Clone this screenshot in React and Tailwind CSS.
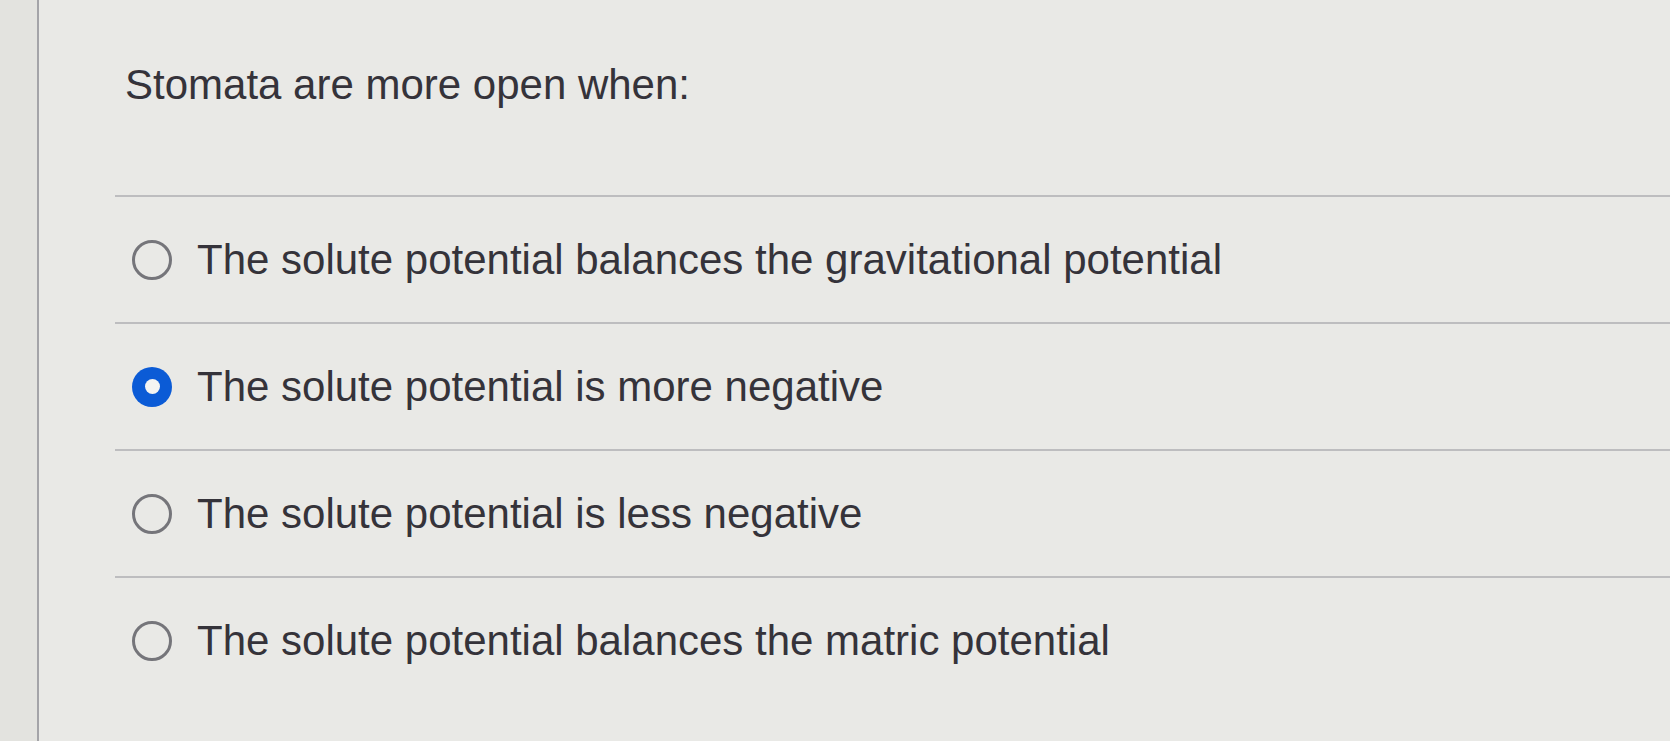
import { useState } from "react";

const options = [
  "The solute potential balances the gravitational potential",
  "The solute potential is more negative",
  "The solute potential is less negative",
  "The solute potential balances the matric potential",
];

function Radio({ checked }) {
  if (checked) {
    return (
      <span className="flex h-[40px] w-[40px] shrink-0 items-center justify-center rounded-full bg-[#0b5bd6]">
        <span className="h-[15px] w-[15px] rounded-full bg-[#f4f4f2]" />
      </span>
    );
  }
  return <span className="h-[40px] w-[40px] shrink-0 rounded-full border-[3px] border-[#75757a]" />;
}

export default function App() {
  const [selected, setSelected] = useState(1);

  return (
    <div
      className="flex h-[741px] w-[1670px] overflow-hidden bg-[#e9e9e6] text-[#35333a]"
      style={{ fontFamily: '"Liberation Sans", Arial, sans-serif' }}
    >
      <div className="w-[37px] shrink-0 bg-[#e3e3df]" />
      <div className="w-[2px] shrink-0 bg-[#a4a4a8]" />

      <main className="flex-1 pl-[76px]">
        <h2 className="mt-[61px] pl-[10px] text-[42px] leading-[48px]">Stomata are more open when:</h2>

        <div className="mt-[86px]">
          {options.map((text, i) => (
            <label
              key={text}
              onClick={() => setSelected(i)}
              className="flex h-[127px] cursor-pointer items-center gap-[25px] border-t-2 border-[#bdbdbf] pl-[17px]"
            >
              <Radio checked={selected === i} />
              <span className="text-[42px] leading-[48px]">{text}</span>
            </label>
          ))}
        </div>
      </main>
    </div>
  );
}
